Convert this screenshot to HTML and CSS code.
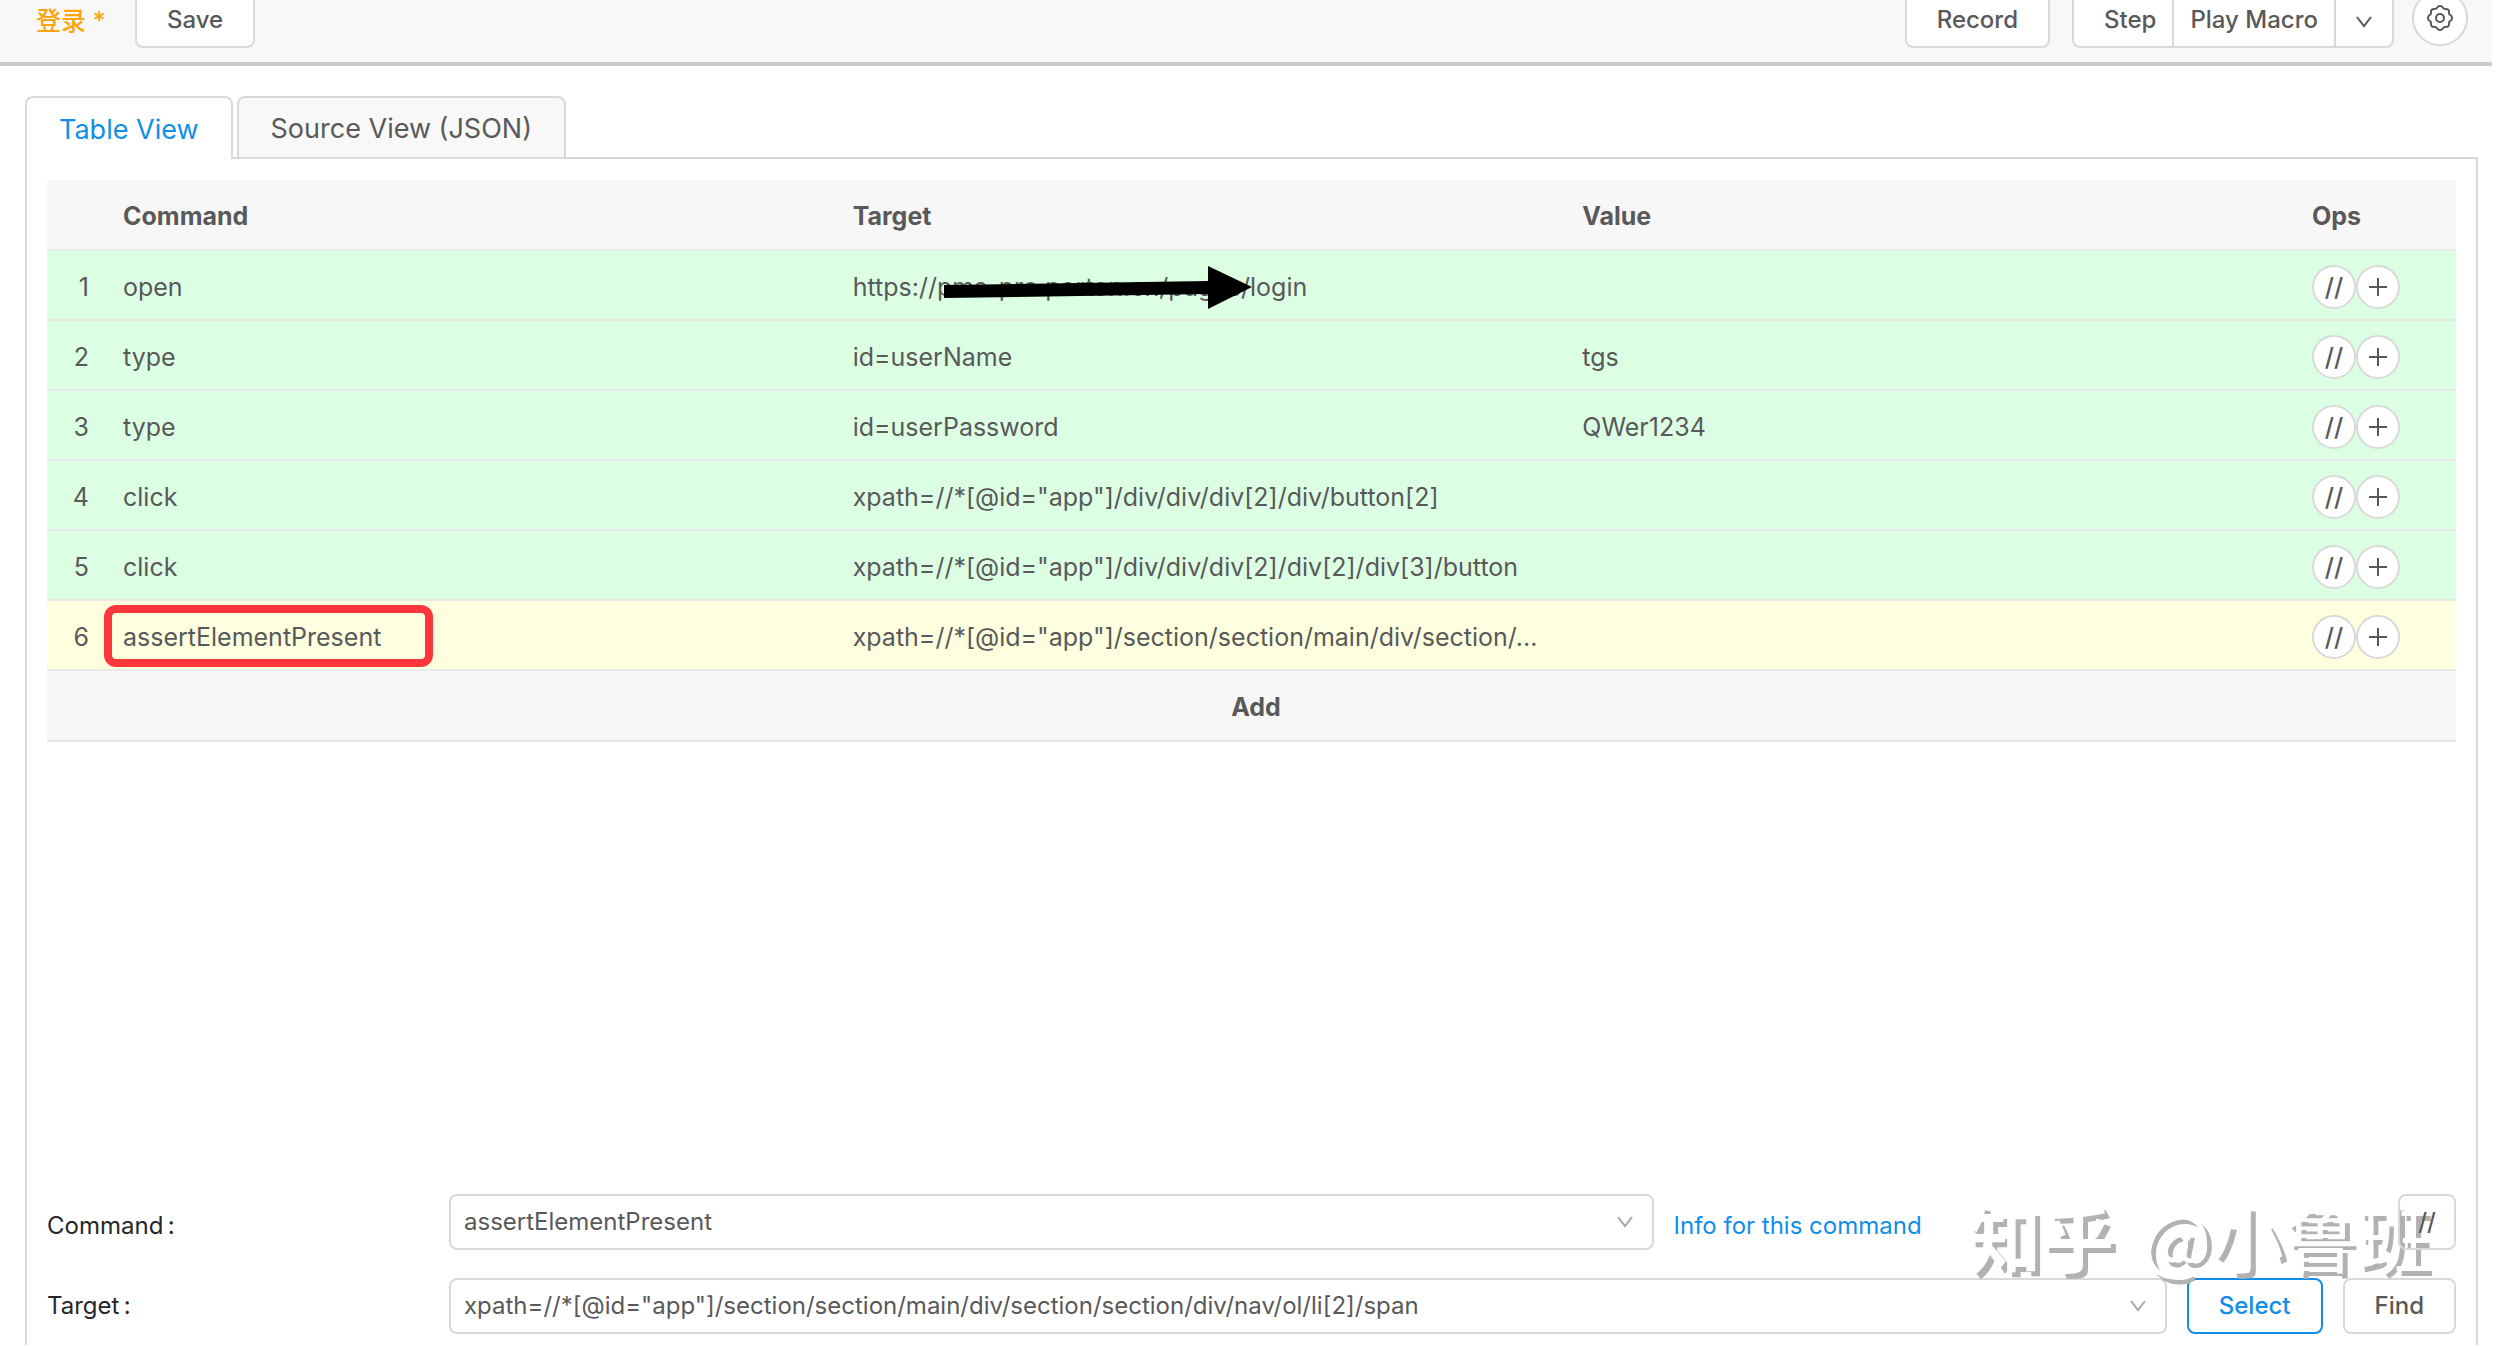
FILE: index.html
```
<!DOCTYPE html>
<html lang="en">
<head>
<meta charset="UTF-8" />
<meta name="viewport" content="width=device-width, initial-scale=1" />
<title>登录 - Macro Editor</title>
<link rel="stylesheet" href="styles.css">
</head>
<body>

<header class="header">
  <span class="file-name">登录 *</span>
  <button class="btn">Save</button>
  <div class="actions">
    <button class="btn">Record</button>
    <div class="btn-group">
      <button class="btn btn-step">Step</button>
      <button class="btn btn-play">Play Macro</button>
      <button class="btn btn-more" aria-label="More">
        <svg class="chevron" viewBox="0 0 16 12"><path d="M1 1l7 9 7-9" /></svg>
      </button>
    </div>
    <button class="btn-circle btn-settings" aria-label="Settings">
      <svg class="gear" viewBox="0 0 26 26"><path d="M10.500 2 Q13 0 15.500 2 Q16.200 4.400 18.800 3.900 Q22 3.800 22.100 7.200 Q21.600 9.800 24 10.500 Q26 13 24 15.500 Q21.600 16.200 22.100 18.800 Q22 22.200 18.800 22.100 Q16.200 21.600 15.500 24 Q13 26 10.500 24 Q9.800 21.600 7.200 22.100 Q4 22.200 3.900 18.800 Q4.400 16.200 2 15.500 Q0 13 2 10.500 Q4.400 9.800 3.900 7.200 Q4 3.800 7.200 3.900 Q9.800 4.400 10.500 2 Z" /><circle cx="13" cy="13" r="4" /></svg>
    </button>
  </div>
</header>

<main class="editor">
  <div class="tabs" role="tablist">
    <button class="tab active" role="tab">Table View</button>
    <button class="tab" role="tab">Source View (JSON)</button>
  </div>

  <div class="panel">
    <table class="commands">
      <colgroup>
        <col class="col-num">
        <col>
        <col>
        <col>
        <col class="col-ops">
      </colgroup>
      <thead>
        <tr><th></th><th>Command</th><th>Target</th><th>Value</th><th>Ops</th></tr>
      </thead>
      <tbody>
        <tr class="done">
          <td class="num">1</td>
          <td>open</td>
          <td>
            <div class="marked">https://pms-pro.porton.cn/pages/login
              <svg class="arrow" viewBox="0 0 308 44"><path d="M0 19L264 15V0L308 21L264 43V28L0 32Z" /></svg>
            </div>
          </td>
          <td></td>
          <td><div class="ops"><button class="btn-circle">//</button><button class="btn-circle" aria-label="Add"><svg class="plus" viewBox="0 0 18 18"><path d="M9 0v18M0 9h18" /></svg></button></div></td>
        </tr>
        <tr class="done">
          <td class="num">2</td>
          <td>type</td>
          <td>id=userName</td>
          <td>tgs</td>
          <td><div class="ops"><button class="btn-circle">//</button><button class="btn-circle" aria-label="Add"><svg class="plus" viewBox="0 0 18 18"><path d="M9 0v18M0 9h18" /></svg></button></div></td>
        </tr>
        <tr class="done">
          <td class="num">3</td>
          <td>type</td>
          <td>id=userPassword</td>
          <td>QWer1234</td>
          <td><div class="ops"><button class="btn-circle">//</button><button class="btn-circle" aria-label="Add"><svg class="plus" viewBox="0 0 18 18"><path d="M9 0v18M0 9h18" /></svg></button></div></td>
        </tr>
        <tr class="done">
          <td class="num">4</td>
          <td>click</td>
          <td>xpath=//*[@id="app"]/div/div/div[2]/div/button[2]</td>
          <td></td>
          <td><div class="ops"><button class="btn-circle">//</button><button class="btn-circle" aria-label="Add"><svg class="plus" viewBox="0 0 18 18"><path d="M9 0v18M0 9h18" /></svg></button></div></td>
        </tr>
        <tr class="done">
          <td class="num">5</td>
          <td>click</td>
          <td>xpath=//*[@id="app"]/div/div/div[2]/div[2]/div[3]/button</td>
          <td></td>
          <td><div class="ops"><button class="btn-circle">//</button><button class="btn-circle" aria-label="Add"><svg class="plus" viewBox="0 0 18 18"><path d="M9 0v18M0 9h18" /></svg></button></div></td>
        </tr>
        <tr class="current">
          <td class="num">6</td>
          <td><div class="marked">assertElementPresent<span class="box"></span></div></td>
          <td>xpath=//*[@id="app"]/section/section/main/div/section/...</td>
          <td></td>
          <td><div class="ops"><button class="btn-circle">//</button><button class="btn-circle" aria-label="Add"><svg class="plus" viewBox="0 0 18 18"><path d="M9 0v18M0 9h18" /></svg></button></div></td>
        </tr>
      </tbody>
      <tfoot>
        <tr><td colspan="5">Add</td></tr>
      </tfoot>
    </table>

    <form class="form">
      <div class="form-row">
        <label class="label label-low" for="command">Command&thinsp;:</label>
        <div class="select select-command">
          <select id="command"><option>assertElementPresent</option></select>
          <svg class="chevron" viewBox="0 0 16 12"><path d="M1 1l7 9 7-9" /></svg>
        </div>
        <a class="info" href="#">Info for this command</a>
        <button type="button" class="btn btn-comment">//</button>
      </div>
      <div class="form-row">
        <label class="label" for="target">Target&thinsp;:</label>
        <div class="select">
          <select id="target"><option>xpath=//*[@id="app"]/section/section/main/div/section/section/div/nav/ol/li[2]/span</option></select>
          <svg class="chevron" viewBox="0 0 16 12"><path d="M1 1l7 9 7-9" /></svg>
        </div>
        <button type="button" class="btn btn-primary">Select</button>
        <button type="button" class="btn btn-find">Find</button>
      </div>
    </form>
  </div>
</main>

<div class="watermark"><b>知乎</b><span>@小鲁班</span></div>

</body>
</html>
```

FILE: styles.css
```
* {
  box-sizing: border-box;
}
body {
  margin: 0;
  height: 100vh;
  display: flex;
  flex-direction: column;
  background: #fff;
  color: #595959;
  font-family: Inter, "Noto Sans CJK SC", sans-serif;
  font-size: 25px;
  line-height: 36px;
  overflow: hidden;
}
button, select {
  font: inherit;
  color: inherit;
}
svg {
  fill: none;
  stroke: currentColor;
  stroke-width: 2;
}

/* top bar */
.header {
  display: flex;
  align-items: flex-end;
  height: 66px;
  margin-right: 4px;
  padding: 0 24px 14px 36px;
  background: #f8f8f8;
  border-bottom: 4px solid #ccc;
}
.file-name {
  width: 99px;
  padding-bottom: 9px;
  color: #fca50f;
  font-weight: 500;
}
.actions {
  display: flex;
  align-items: flex-end;
  margin-left: auto;
}
.btn {
  height: 56px;
  padding: 0 30px;
  background: #fff;
  border: 2px solid #d9d9d9;
  border-radius: 8px;
  font-size: 24px;
  font-weight: 500;
  cursor: pointer;
}
.btn-group {
  display: flex;
  margin: 0 18px 0 22px;
}
.btn-step {
  padding: 0 16px 0 30px;
  border-radius: 8px 0 0 8px;
}
.btn-play {
  padding: 0 16px;
  border-width: 2px 0;
  border-radius: 0;
}
.btn-more {
  width: 60px;
  padding: 0;
  border-radius: 0 8px 8px 0;
}
.chevron {
  width: 16px;
  height: 12px;
}
.btn-circle {
  display: flex;
  align-items: center;
  justify-content: center;
  width: 44px;
  height: 44px;
  padding: 0;
  background: #fff;
  border: 2px solid #d9d9d9;
  border-radius: 50%;
  font-weight: 500;
  cursor: pointer;
}
.btn-settings {
  width: 56px;
  height: 56px;
  margin-bottom: 2px;
}
.gear {
  width: 26px;
  height: 26px;
}

/* tabs */
.editor {
  flex: 1;
  display: flex;
  flex-direction: column;
  padding: 30px 18px 2px 25px;
}
.tabs {
  display: flex;
  gap: 4px;
}
.tab {
  height: 61px;
  padding: 2px 32px 0;
  background: #f8f8f8;
  border: 2px solid #d9d9d9;
  border-bottom: none;
  border-radius: 8px 8px 0 0;
  font-size: 27px;
  cursor: pointer;
}
.tab.active {
  height: 63px;
  margin-bottom: -2px;
  background: #fff;
  color: #108ee9;
  z-index: 1;
}
.panel {
  flex: 1;
  display: flex;
  flex-direction: column;
  justify-content: space-between;
  padding: 21px 20px 11px;
  border: 2px solid #d9d9d9;
  border-bottom: none;
}

/* command table */
.commands {
  width: 100%;
  table-layout: fixed;
  border-collapse: separate;
  border-spacing: 0;
}
.col-num {
  width: 60px;
}
.col-ops {
  width: 160px;
}
th, td {
  height: 70px;
  padding: 4px 16px 0;
  border-bottom: 2px solid #e9e9e9;
  text-align: left;
  white-space: nowrap;
}
th, tfoot td {
  height: 71px;
  padding-top: 2px;
  background: #f7f7f7;
  font-weight: 700;
}
.num {
  padding-right: 18px;
  text-align: right;
}
.done {
  background: #dcffe4;
}
.current {
  background: #feffdf;
}
tfoot td {
  padding-left: 25px;
  text-align: center;
}
.ops {
  display: flex;
}
.plus {
  width: 18px;
  height: 18px;
}

/* marks drawn over the cells */
.marked {
  position: relative;
}
.arrow {
  position: absolute;
  left: 91px;
  top: -3px;
  width: 308px;
  height: 44px;
  fill: #000;
  stroke: none;
}
.box {
  position: absolute;
  left: -19px;
  top: -14px;
  width: 329px;
  height: 62px;
  border: 8px solid #fc363b;
  border-radius: 12px;
}

/* form under the table */
.form {
  display: flex;
  flex-direction: column;
  gap: 28px;
}
.form-row {
  display: flex;
  align-items: center;
}
.label {
  width: 402px;
  color: #262626;
  font-size: 24px;
}
.label-low, .info {
  padding-top: 8px;
}
.select {
  position: relative;
  flex: 1;
}
.select-command {
  flex: 0 0 50%;
}
.select select {
  display: block;
  width: 100%;
  height: 56px;
  padding: 0 48px 0 13px;
  appearance: none;
  background: #fff;
  border: 2px solid #d9d9d9;
  border-radius: 8px;
  font-size: 24px;
}
.select .chevron {
  position: absolute;
  right: 21px;
  top: 22px;
  color: #a6a6a6;
}
.info {
  margin-left: 20px;
  color: #108ee9;
  font-size: 24px;
  text-decoration: none;
}
.btn-comment {
  z-index: 2;
  width: 58px;
  margin-left: auto;
  padding: 0;
  background: transparent;
}
.btn-primary {
  margin: 0 20px;
  border-color: #108ee9;
  color: #108ee9;
}

.watermark {
  position: absolute;
  z-index: 1;
  right: 66px;
  bottom: 72px;
  display: flex;
  align-items: center;
  gap: 28px;
  color: #fff;
  font-family: "Noto Sans CJK SC", sans-serif;
  font-size: 73px;
  line-height: 80px;
  text-shadow: 5px 5px 0 #b2b2b2;
  pointer-events: none;
}
```
